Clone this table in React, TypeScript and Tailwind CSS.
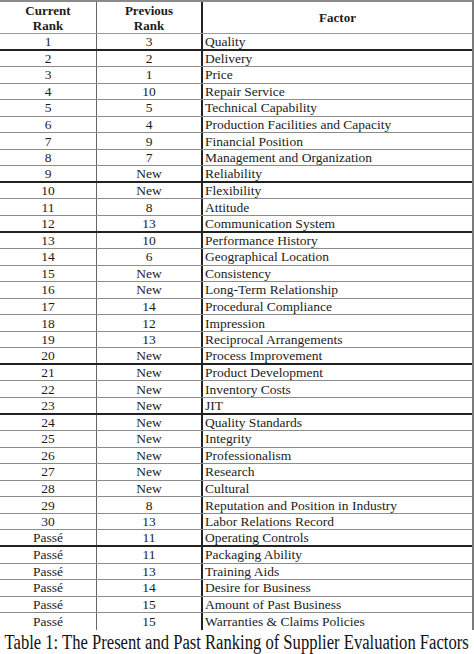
const rows: [string, string, string][] = [
  ["1", "3", "Quality"],
  ["2", "2", "Delivery"],
  ["3", "1", "Price"],
  ["4", "10", "Repair Service"],
  ["5", "5", "Technical Capability"],
  ["6", "4", "Production Facilities and Capacity"],
  ["7", "9", "Financial Position"],
  ["8", "7", "Management and Organization"],
  ["9", "New", "Reliability"],
  ["10", "New", "Flexibility"],
  ["11", "8", "Attitude"],
  ["12", "13", "Communication System"],
  ["13", "10", "Performance History"],
  ["14", "6", "Geographical Location"],
  ["15", "New", "Consistency"],
  ["16", "New", "Long-Term Relationship"],
  ["17", "14", "Procedural Compliance"],
  ["18", "12", "Impression"],
  ["19", "13", "Reciprocal Arrangements"],
  ["20", "New", "Process Improvement"],
  ["21", "New", "Product Development"],
  ["22", "New", "Inventory Costs"],
  ["23", "New", "JIT"],
  ["24", "New", "Quality Standards"],
  ["25", "New", "Integrity"],
  ["26", "New", "Professionalism"],
  ["27", "New", "Research"],
  ["28", "New", "Cultural"],
  ["29", "8", "Reputation and Position in Industry"],
  ["30", "13", "Labor Relations Record"],
  ["Passé", "11", "Operating Controls"],
  ["Passé", "11", "Packaging Ability"],
  ["Passé", "13", "Training Aids"],
  ["Passé", "14", "Desire for Business"],
  ["Passé", "15", "Amount of Past Business"],
  ["Passé", "15", "Warranties & Claims Policies"],
];

// rows whose bottom rule prints darker in the scan
const darkRules = [0, 8, 11, 19, 22, 30];

export default function App() {
  return (
    <div className="w-[474px] h-[654px] bg-white text-[#1c1c1c] font-['Liberation_Serif',serif] overflow-hidden">
      <div className="border-t-2 border-[#8a8a8a] border-r-2 border-r-[#7a7a7a] w-[474px]">
        <div className="grid grid-cols-[97px_106px_1fr] h-[32px] border-b border-[#9a9a9a] font-bold text-[13px] leading-[15px]">
          <div className="border-r border-[#666] flex items-center justify-center text-center">
            Current
            <br />
            Rank
          </div>
          <div className="border-r-2 border-[#222] flex items-center justify-center text-center">
            Previous
            <br />
            Rank
          </div>
          <div className="flex items-center justify-center">Factor</div>
        </div>
        {rows.map(([cur, prev, factor], i) => (
          <div
            key={i}
            className={
              "grid grid-cols-[97px_106px_1fr] h-[16.55px] text-[13.5px] leading-[15px] " +
              (i === rows.length - 1
                ? ""
                : darkRules.includes(i)
                  ? "border-b-2 border-[#222]"
                  : "border-b border-[#8c8c8c]")
            }
          >
            <div className="border-r border-[#666] flex items-center justify-center">{cur}</div>
            <div className="border-r-2 border-[#222] flex items-center justify-center">{prev}</div>
            <div className="flex items-center pl-[2px] whitespace-nowrap">{factor}</div>
          </div>
        ))}
      </div>
      <div className="flex justify-center h-[24px] items-center">
        <div className="text-[20px] leading-[24px] text-[#111] whitespace-nowrap scale-x-[0.83] origin-center">
          Table 1: The Present and Past Ranking of Supplier Evaluation Factors
        </div>
      </div>
    </div>
  );
}
